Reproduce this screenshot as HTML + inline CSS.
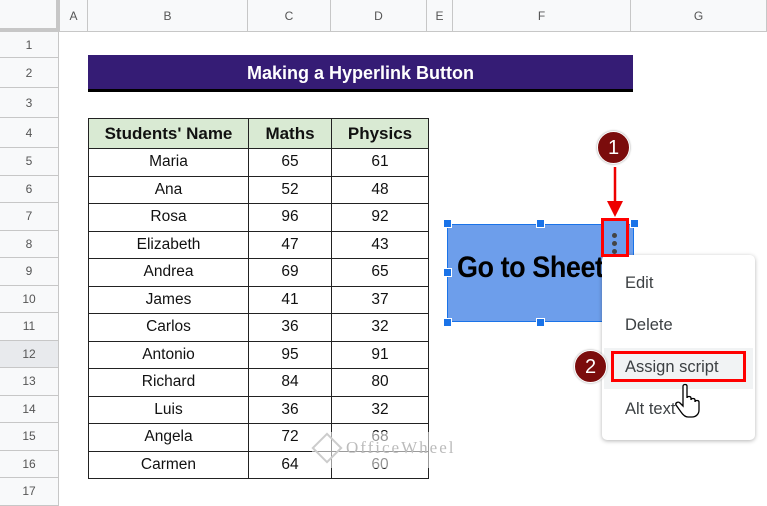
<!DOCTYPE html>
<html><head><meta charset="utf-8"><style>
*{margin:0;padding:0;box-sizing:border-box}
body{width:767px;height:490px;overflow:hidden;background:#fff;font-family:"Liberation Sans",Arial,sans-serif;position:relative}
.a{position:absolute}
.ch{position:absolute;top:0;height:32px;background:#f8f9fa;border-right:1px solid #c7c7c7;border-bottom:1px solid #c7c7c7;color:#555;font-size:12px;text-align:center;line-height:32px}
.rh{position:absolute;left:0;width:59px;background:#f8f9fa;border-right:1px solid #c7c7c7;border-bottom:1px solid #c7c7c7;color:#555;font-size:12px;text-align:center}
table{position:absolute;left:88px;top:118px;border-collapse:collapse;font-size:15.5px;color:#111}
td{border:1.5px solid #222;text-align:center;height:27.5px;padding:0}
th{border:1.5px solid #222;background:#d9ead3;height:30px;font-size:17px;font-weight:bold}
.h{position:absolute;width:9px;height:9px;background:#1a73e8;border:1px solid #fff}
.mi{position:absolute;left:625px;font-size:16.5px;color:#3c4043;font-family:"Liberation Sans",sans-serif}
.circ{position:absolute;width:33px;height:33px;border-radius:50%;background:#7b0c0c;color:#fff;font-size:20px;text-align:center;line-height:33px;border:1px solid #fff;box-shadow:0 0 2px #999}
</style></head><body>
<div class="ch" style="left:0;width:60px;border-right:4px solid #c7c7c7;border-bottom:4px solid #c7c7c7"></div>
<div class="ch" style="left:60px;width:28px">A</div>
<div class="ch" style="left:88px;width:160px">B</div>
<div class="ch" style="left:248px;width:83px">C</div>
<div class="ch" style="left:331px;width:96px">D</div>
<div class="ch" style="left:427px;width:26px">E</div>
<div class="ch" style="left:453px;width:178px">F</div>
<div class="ch" style="left:631px;width:136px">G</div>
<div class="rh" style="top:32px;height:26px;line-height:26px">1</div>
<div class="rh" style="top:58px;height:30px;line-height:30px">2</div>
<div class="rh" style="top:88px;height:30px;line-height:30px">3</div>
<div class="rh" style="top:118px;height:30px;line-height:30px">4</div>
<div class="rh" style="top:148px;height:27.5px;line-height:27px">5</div>
<div class="rh" style="top:175.5px;height:27.5px;line-height:27px">6</div>
<div class="rh" style="top:203px;height:27.5px;line-height:27px">7</div>
<div class="rh" style="top:230.5px;height:27.5px;line-height:27px">8</div>
<div class="rh" style="top:258px;height:27.5px;line-height:27px">9</div>
<div class="rh" style="top:285.5px;height:27.5px;line-height:27px">10</div>
<div class="rh" style="top:313px;height:27.5px;line-height:27px">11</div>
<div class="rh" style="top:340.5px;height:27.5px;line-height:27px;background:#e8eaed">12</div>
<div class="rh" style="top:368px;height:27.5px;line-height:27px">13</div>
<div class="rh" style="top:395.5px;height:27.5px;line-height:27px">14</div>
<div class="rh" style="top:423px;height:27.5px;line-height:27px">15</div>
<div class="rh" style="top:450.5px;height:27.5px;line-height:27px">16</div>
<div class="rh" style="top:478px;height:27.5px;line-height:27px">17</div>

<div class="a" style="left:88px;top:55px;width:545px;height:37px;background:#351c75;border-bottom:3px solid #000;color:#fff;font-weight:bold;font-size:18px;text-align:center;line-height:36px">Making a Hyperlink Button</div>

<table>
<tr><th style="width:160px">Students' Name</th><th style="width:83px">Maths</th><th style="width:97px">Physics</th></tr>
<tr><td>Maria</td><td>65</td><td>61</td></tr>
<tr><td>Ana</td><td>52</td><td>48</td></tr>
<tr><td>Rosa</td><td>96</td><td>92</td></tr>
<tr><td>Elizabeth</td><td>47</td><td>43</td></tr>
<tr><td>Andrea</td><td>69</td><td>65</td></tr>
<tr><td>James</td><td>41</td><td>37</td></tr>
<tr><td>Carlos</td><td>36</td><td>32</td></tr>
<tr><td>Antonio</td><td>95</td><td>91</td></tr>
<tr><td>Richard</td><td>84</td><td>80</td></tr>
<tr><td>Luis</td><td>36</td><td>32</td></tr>
<tr><td>Angela</td><td>72</td><td>68</td></tr>
<tr><td>Carmen</td><td>64</td><td>60</td></tr>
</table>
<div class="a" style="left:312px;top:432px;width:145px;height:36px;background:rgba(255,255,255,.55)"></div>
<div class="a" style="left:346px;top:438px;font-family:'Liberation Serif',serif;font-size:17px;letter-spacing:2px;color:#bbb">OfficeWheel</div>
<div class="a" style="left:316px;top:437px;width:22px;height:22px;border:2px solid #ccc;transform:rotate(45deg)"></div>

<div class="a" style="left:447px;top:224px;width:187px;height:98px;background:#6d9eeb;border:1px solid #1a73e8"></div>
<div class="a" style="left:457px;top:251px;font-size:30px;font-weight:bold;color:#000;transform:scaleX(.9);transform-origin:left;letter-spacing:-0.5px;white-space:nowrap">Go to Sheet</div>
<div class="h" style="left:443px;top:219px"></div>
<div class="h" style="left:536px;top:219px"></div>
<div class="h" style="left:630px;top:219px"></div>
<div class="h" style="left:443px;top:268px"></div>
<div class="h" style="left:443px;top:318px"></div>
<div class="h" style="left:536px;top:318px"></div>

<div class="a" style="left:602px;top:255px;width:153px;height:185px;background:#fff;border-radius:5px;box-shadow:0 1px 4px rgba(0,0,0,.3)"></div>
<div class="a" style="left:604px;top:348px;width:149px;height:41px;background:#f1f3f4"></div>
<div class="mi" style="top:274px">Edit</div>
<div class="mi" style="top:316px">Delete</div>
<div class="mi" style="top:358px">Assign script</div>
<div class="mi" style="top:400px">Alt text</div>
<div class="a" style="left:611px;top:351px;width:135px;height:31px;border:3px solid #f00"></div>

<div class="a" style="left:601px;top:218px;width:28px;height:39px;border:3px solid #f00;background:#6d9eeb"></div>
<div class="a" style="left:612px;top:233px;width:5px;height:5px;border-radius:50%;background:#444"></div>
<div class="a" style="left:612px;top:241px;width:5px;height:5px;border-radius:50%;background:#444"></div>
<div class="a" style="left:612px;top:249px;width:5px;height:5px;border-radius:50%;background:#444"></div>

<svg class="a" style="left:600px;top:165px" width="30" height="54"><line x1="15" y1="2" x2="15" y2="38" stroke="#e00" stroke-width="2.5"/><polygon points="7,36 23,36 15,52" fill="#e00"/></svg>
<div class="circ" style="left:597px;top:131px">1</div>
<div class="circ" style="left:574px;top:350px">2</div>

<svg class="a" style="left:674px;top:382px" width="30" height="36" viewBox="0 0 30 36"><path d="M9 4c0-2 4-2 4 0v12c0-2 4-2 4 0v2c0-2 4-2 4 0v2c0-2 4-2 4 0v8c0 4-3 7-7 7h-4c-3 0-5-2-7-5l-5-7c-1-2 2-4 4-2l3 3z" fill="#fff" stroke="#000" stroke-width="1.3"/></svg>
</body></html>
